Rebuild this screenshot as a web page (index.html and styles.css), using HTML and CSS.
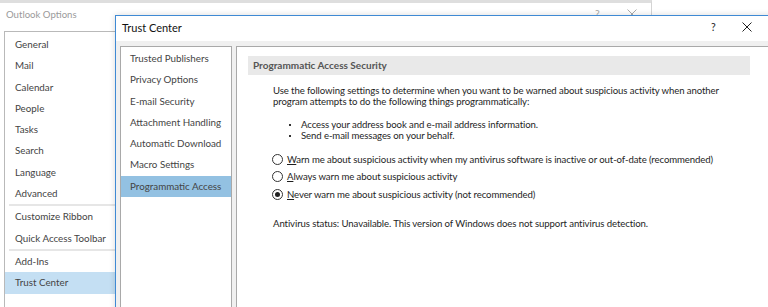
FILE: index.html
```html
<!DOCTYPE html>
<html>
<head>
<meta charset="utf-8">
<link rel="stylesheet" href="styles.css">
</head>
<body>
<div class="desk">
  <div class="win outer">
    <div class="titlebar">
      <span class="title">Outlook Options</span>
      <span class="tbtn q">?</span>
      <span class="tbtn x"><svg width="10" height="10" viewBox="0 0 10 10"><path d="M0.5 0.5L9.5 9.5M9.5 0.5L0.5 9.5" stroke="currentColor" stroke-width="1" fill="none"/></svg></span>
    </div>
    <div class="obody">
      <ul class="onav">
        <li>General</li>
        <li>Mail</li>
        <li>Calendar</li>
        <li>People</li>
        <li>Tasks</li>
        <li>Search</li>
        <li>Language</li>
        <li>Advanced</li>
        <li class="sep"></li>
        <li>Customize Ribbon</li>
        <li>Quick Access Toolbar</li>
        <li class="sep"></li>
        <li>Add-Ins</li>
        <li class="sel">Trust Center</li>
      </ul>
    </div>
  </div>

  <div class="win tc">
    <div class="titlebar">
      <span class="title">Trust Center</span>
      <span class="tbtn q">?</span>
      <span class="tbtn x"><svg width="10" height="10" viewBox="0 0 10 10"><path d="M0.5 0.5L9.5 9.5M9.5 0.5L0.5 9.5" stroke="currentColor" stroke-width="1" fill="none"/></svg></span>
    </div>
    <div class="tbody">
      <ul class="tnav">
        <li>Trusted Publishers</li>
        <li>Privacy Options</li>
        <li>E-mail Security</li>
        <li>Attachment Handling</li>
        <li>Automatic Download</li>
        <li>Macro Settings</li>
        <li class="sel">Programmatic Access</li>
      </ul>
      <div class="content">
        <div class="sechead">Programmatic Access Security</div>
        <div class="inner">
          <p class="intro">Use the following settings to determine when you want to be warned about suspicious activity when another<br>program attempts to do the following things programmatically:</p>
          <ul class="bullets">
            <li>Access your address book and e-mail address information.</li>
            <li>Send e-mail messages on your behalf.</li>
          </ul>
          <div class="radios">
            <label class="radio"><span class="dot"></span><span><u>W</u>arn me about suspicious activity when my antivirus software is inactive or out-of-date (recommended)</span></label>
            <label class="radio"><span class="dot"></span><span><u>A</u>lways warn me about suspicious activity</span></label>
            <label class="radio"><span class="dot on"></span><span><u>N</u>ever warn me about suspicious activity (not recommended)</span></label>
          </div>
          <p class="status">Antivirus status: Unavailable. This version of Windows does not support antivirus detection.</p>
        </div>
      </div>
    </div>
  </div>
</div>
</body>
</html>
```

FILE: styles.css
```css
html, body {
  margin: 0;
  padding: 0;
  background: #ffffff;
  font-family: Lato, "Liberation Sans", Arial, sans-serif;
  font-size: 11px;
  overflow: hidden;
}
.desk {
  position: relative;
  width: 768px;
  height: 307px;
  overflow: hidden;
}
.win {
  position: absolute;
  display: flex;
  flex-direction: column;
  box-sizing: border-box;
}
.outer {
  left: 0;
  top: 0;
  width: 652px;
  height: 330px;
  border-top: 3px solid #dedede;
  border-right: 1px solid #d4d4d4;
  background: #ffffff;
}
.titlebar {
  position: relative;
  height: 25px;
  display: flex;
  align-items: center;
  background: #ffffff;
  flex: none;
}
.title {
  white-space: nowrap;
}
.outer .title {
  color: #9a9a9a;
  font-size: 9.6px;
  margin-left: 6px;
  margin-top: -3px;
}
.tbtn {
  position: absolute;
  top: 0;
  height: 100%;
  display: flex;
  align-items: center;
  font-size: 10.5px;
  margin-top: -2px;
}
.outer .tbtn { color: #aaaaaa; }
.outer .q { left: 595px; }
.outer .x { left: 627px; }
.obody {
  flex: 1;
  padding: 3px 0 0 4px;
  background: #ffffff;
}
.onav {
  list-style: none;
  margin: 0;
  padding: 2px 0 0 0;
  width: 130px;
  height: 300px;
  box-sizing: border-box;
  border: 1px solid #b9b9b9;
  background: #fff;
}
.onav li {
  height: 21.3px;
  line-height: 21.3px;
  padding-left: 10px;
  color: #444444;
  font-size: 9.8px;
  white-space: nowrap;
}
.onav li.sep {
  height: 2px;
  margin: 0 4px 0 4px;
  background: #e6e6e6;
  width: 102px;
}
.onav li.sel {
  background: #c4dff3;
}

.tc {
  left: 115px;
  top: 15px;
  width: 680px;
  height: 320px;
  border: 1px solid #3f8ad4;
  background: #f0f0f0;
  box-shadow: 0 0 6px rgba(0,0,0,0.15);
}
.tc .title {
  color: #111;
  font-size: 11px;
  margin-left: 6px;
  margin-top: -2px;
}
.tc .tbtn { color: #222; }
.tc .q { left: 595px; }
.tc .x { left: 626px; }
.tbody {
  flex: 1;
  display: flex;
  gap: 4px;
  padding: 5px 0 0 4px;
  background: #f0f0f0;
}
.tnav {
  list-style: none;
  margin: 0;
  padding: 1px 0 0 0;
  width: 112px;
  flex: none;
  box-sizing: border-box;
  border: 1px solid #a9a9a9;
  border-bottom: none;
  background: #fff;
}
.tnav li {
  height: 21.3px;
  line-height: 21.3px;
  padding-left: 9px;
  color: #444444;
  font-size: 9.8px;
  white-space: nowrap;
}
.tnav li.sel {
  background: #93c1e2;
}
.content {
  flex: 1;
  box-sizing: border-box;
  border: 1px solid #a9a9a9;
  border-bottom: none;
  border-right: none;
  background: #fff;
  padding: 9px 0 0 11px;
}
.sechead {
  width: 502px;
  height: 19px;
  line-height: 19px;
  background: #e9e9e9;
  color: #555;
  font-weight: bold;
  font-size: 10px;
  padding-left: 5px;
  box-sizing: border-box;
}
.inner {
  padding-left: 25px;
  color: #1e1e1e;
  font-size: 9.6px;
  letter-spacing: -0.1px;
  white-space: nowrap;
}
.intro {
  margin: 10px 0 0 0;
  line-height: 11.3px;
}
.bullets {
  margin: 11px 0 0 0;
  padding-left: 28px;
  line-height: 11px;
}
.bullets li {
  list-style: none;
  position: relative;
}
.bullets li::before {
  content: "";
  position: absolute;
  left: -12px;
  top: 5px;
  width: 2px;
  height: 2px;
  background: #333;
}
.radios {
  margin: 10px 0 0 -1px;
  display: flex;
  flex-direction: column;
}
.radio {
  display: flex;
  align-items: center;
  gap: 4px;
  height: 17.5px;
}
.dot {
  width: 9px;
  height: 9px;
  border: 1px solid #333;
  border-radius: 50%;
  position: relative;
  flex: none;
  background: #fff;
}
.dot.on::after {
  content: "";
  position: absolute;
  left: 2px;
  top: 2px;
  width: 5px;
  height: 5px;
  border-radius: 50%;
  background: #222;
}
.status {
  margin: 15px 0 0 0;
}
```
